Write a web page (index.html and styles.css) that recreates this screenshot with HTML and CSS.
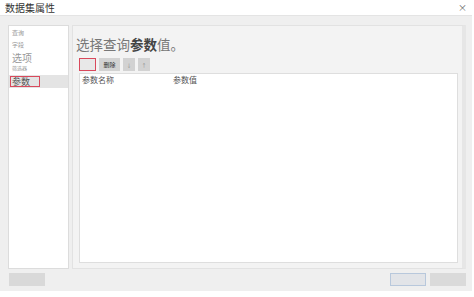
FILE: index.html
```html
<!DOCTYPE html>
<html lang="zh">
<head>
  <meta charset="UTF-8">
  <title>数据集属性</title>
  <link rel="stylesheet" href="styles.css">
</head>
<body>
  <div class="dialog">
    <div class="titlebar">
      <span class="title">数据集属性</span>
      <span class="close">×</span>
    </div>

    <div class="body">
      <div class="main">
        <!-- left navigation -->
        <ul class="nav">
          <li class="nav-item small">查询</li>
          <li class="nav-item small">字段</li>
          <li class="nav-item big">选项</li>
          <li class="nav-item tiny">筛选器</li>
          <li class="nav-item selected"><span class="focus">参数</span></li>
        </ul>

        <!-- parameters page -->
        <div class="page">
          <div class="heading">选择查询<b>参数</b>值。</div>
          <div class="toolbar">
            <button class="tool add"></button>
            <button class="tool del">删除</button>
            <button class="tool arrow">↓</button>
            <button class="tool arrow">↑</button>
          </div>
          <div class="grid">
            <div class="grid-head">
              <span class="col-name">参数名称</span>
              <span class="col-value">参数值</span>
            </div>
          </div>
        </div>
      </div>

      <div class="footer">
        <button class="btn help"></button>
        <div class="right-buttons">
          <button class="btn ok"></button>
          <button class="btn cancel"></button>
        </div>
      </div>
    </div>
  </div>
</body>
</html>
```

FILE: styles.css
```css
body {
  margin: 0;
  font-family: "Noto Sans CJK SC", "Liberation Sans", sans-serif;
  background: #ffffff;
}

.dialog {
  width: 474px;
  height: 297px;
  display: flex;
  flex-direction: column;
}

.titlebar {
  height: 15px;
  display: flex;
  justify-content: space-between;
  align-items: center;
  padding: 0 4px 0 5px;
  background: #ffffff;
}

.title {
  font-size: 10px;
  color: #333;
  line-height: 15px;
}

.close {
  font-size: 9px;
  color: #666;
  margin-right: 3px;
}

.body {
  width: 472px;
  height: 275px;
  background: #efefef;
  border-top: 1px solid #e4e4e4;
  display: flex;
  flex-direction: column;
}

.main {
  display: flex;
  gap: 3px;
  padding: 9px 6px 0 8px;
  height: 244px;
}

.nav {
  list-style: none;
  margin: 0;
  padding: 1px 0 0;
  width: 59px;
  background: #ffffff;
  border: 1px solid #dcdcdc;
}

.nav-item {
  color: #999;
  padding-left: 3px;
}

.nav-item.small {
  font-size: 6px;
  line-height: 12px;
}

.nav-item.big {
  font-size: 10px;
  line-height: 13px;
}

.nav-item.tiny {
  font-size: 5px;
  line-height: 8px;
}

.nav-item.selected {
  background: #e4e4e4;
  margin-top: 3px;
  height: 13px;
  padding-left: 1px;
  display: flex;
  align-items: center;
}

.focus {
  display: inline-block;
  width: 27px;
  height: 9px;
  line-height: 9px;
  font-size: 9px;
  color: #555;
  border: 1px solid #d9495c;
  padding-left: 1px;
}

.page {
  flex: 1;
  background: #f3f3f3;
  border: 1px solid #e2e2e2;
  border-right: 4px solid #e6e6e6;
  display: flex;
  flex-direction: column;
  padding: 0 4px 5px 6px;
}

.heading {
  font-size: 13.5px;
  color: #777;
  margin: 10px 0 0 -3px;
  line-height: 17px;
}

.heading b {
  color: #444;
  font-weight: bold;
}

.toolbar {
  display: flex;
  gap: 3px;
  margin-top: 5px;
  height: 13px;
}

.tool {
  border: none;
  padding: 0;
  background: #d2d2d2;
  color: #555;
  font-family: inherit;
  font-size: 6px;
  height: 13px;
}

.tool.add {
  width: 17px;
  background: #e8e8e8;
  border: 1px solid #d9495c;
}

.tool.del {
  width: 21px;
  color: #333;
}

.tool.arrow {
  width: 12px;
  font-size: 5px;
  color: #888;
}

.grid {
  flex: 1;
  margin-top: 2px;
  background: #ffffff;
  border: 1px solid #dedede;
}

.grid-head {
  display: flex;
  font-size: 8px;
  color: #555;
  padding: 1px 0 0 2px;
  line-height: 10px;
}

.col-name {
  width: 91px;
}

.footer {
  display: flex;
  justify-content: space-between;
  padding: 4px 6px 0 9px;
}

.btn {
  width: 36px;
  height: 13px;
  border: none;
  padding: 0;
  background: #d9d9d9;
}

.right-buttons {
  display: flex;
  gap: 4px;
}

.btn.ok {
  background: #e2e4e8;
  border: 1px solid #b8c8dc;
}

.btn.cancel {
  background: #dadada;
}
```
